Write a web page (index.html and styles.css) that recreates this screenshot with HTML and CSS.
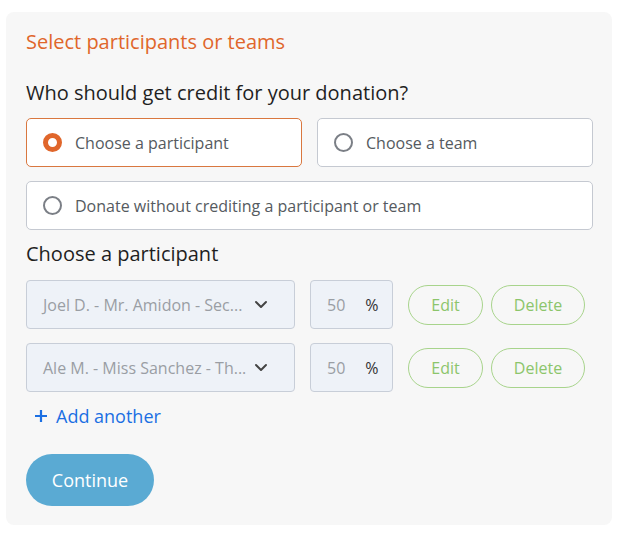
FILE: index.html
```html
<!DOCTYPE html>
<html lang="en">
<head>
<meta charset="utf-8">
<title>Select participants or teams</title>
<link rel="stylesheet" href="styles.css">
</head>
<body>
<div class="card">
  <h2 class="title">Select participants or teams</h2>
  <h3 class="question">Who should get credit for your donation?</h3>
  <div class="options">
    <label class="option selected"><span class="radio on"></span><span>Choose a participant</span></label>
    <label class="option"><span class="radio"></span><span>Choose a team</span></label>
    <label class="option wide"><span class="radio"></span><span>Donate without crediting a participant or team</span></label>
  </div>
  <h3 class="sub">Choose a participant</h3>
  <div class="rows">
    <div class="row">
      <div class="select"><span class="sel-text">Joel D. - Mr. Amidon - Sec...</span>
        <svg class="chev" width="14" height="9" viewBox="0 0 14 9"><path d="M2 2 L7 7 L12 2" fill="none" stroke="#444" stroke-width="2" stroke-linecap="round" stroke-linejoin="round"/></svg>
      </div>
      <div class="pct"><span class="num">50</span><span class="sign">%</span></div>
      <button class="pill edit">Edit</button>
      <button class="pill del">Delete</button>
    </div>
    <div class="row">
      <div class="select"><span class="sel-text">Ale M. - Miss Sanchez - Th...</span>
        <svg class="chev" width="14" height="9" viewBox="0 0 14 9"><path d="M2 2 L7 7 L12 2" fill="none" stroke="#444" stroke-width="2" stroke-linecap="round" stroke-linejoin="round"/></svg>
      </div>
      <div class="pct"><span class="num">50</span><span class="sign">%</span></div>
      <button class="pill edit">Edit</button>
      <button class="pill del">Delete</button>
    </div>
  </div>
  <a class="add" href="#"><svg width="14" height="14" viewBox="0 0 14 14"><path d="M7 1 V13 M1 7 H13" stroke="#1b6fe3" stroke-width="2.2"/></svg><span>Add another</span></a>
  <button class="continue">Continue</button>
</div>
</body>
</html>
```

FILE: styles.css
```css
* { box-sizing: border-box; }
body {
  margin: 0;
  background: #fff;
  font-family: "Open Sans", "Noto Sans", sans-serif;
}
.card {
  margin: 12px 8px 12px 6px;
  width: 606px;
  height: 513px;
  background: #f7f7f7;
  border-radius: 8px;
  padding: 16px 19px 0 20px;
}
.title {
  margin: 0;
  font-size: 20px;
  font-weight: 400;
  line-height: 27px;
  color: #e0662b;
}
.question {
  margin: 24px 0 0;
  font-size: 20px;
  font-weight: 500;
  line-height: 27px;
  color: #1f1f1f;
}
.options {
  margin-top: 12px;
  display: grid;
  grid-template-columns: 276px 276px;
  column-gap: 15px;
  row-gap: 14px;
}
.option {
  height: 49px;
  background: #fff;
  border: 1px solid #c5c9d1;
  border-radius: 5px;
  display: flex;
  align-items: center;
  gap: 13px;
  padding-left: 16px;
  font-size: 16px;
  color: #555a60;
}
.option.selected { border-color: #d9773f; }
.option.wide { grid-column: 1 / 3; }
.radio {
  width: 19px;
  height: 19px;
  border-radius: 50%;
  border: 2px solid #7b7f86;
  flex: none;
}
.radio.on {
  border: 5px solid #e0662b;
  background: #fff;
}
.sub {
  margin: 10px 0 0;
  font-size: 20px;
  font-weight: 500;
  line-height: 27px;
  color: #1f1f1f;
}
.rows {
  margin-top: 13px;
  display: flex;
  flex-direction: column;
  gap: 14px;
}
.row {
  display: flex;
  align-items: center;
}
.select {
  width: 269px;
  height: 49px;
  background: #eef2f8;
  border: 1px solid #c8ced8;
  border-radius: 4px;
  display: flex;
  align-items: center;
  justify-content: space-between;
  padding: 0 26px 0 16px;
  font-size: 16px;
  color: #9a9ea4;
}
.chev { flex: none; }
.pct {
  margin-left: 15px;
  width: 83px;
  height: 49px;
  background: #eef2f8;
  border: 1px solid #c8ced8;
  border-radius: 4px;
  display: flex;
  align-items: center;
  padding-left: 16px;
  font-size: 16px;
}
.pct .num { color: #9a9ea4; }
.pct .sign { margin-left: 20px; color: #333; }
.pill {
  height: 40px;
  border: 1px solid #a8d48c;
  border-radius: 20px;
  background: transparent;
  color: #8cc56b;
  font-family: inherit;
  font-size: 16px;
  padding: 0;
}
.edit { margin-left: 15px; width: 75px; }
.del { margin-left: 8px; width: 94px; }
.add {
  margin: 12px 0 0 8px;
  display: inline-flex;
  align-items: center;
  gap: 8px;
  font-size: 18px;
  color: #1b6fe3;
  text-decoration: none;
  line-height: 24px;
}
.continue {
  display: block;
  margin-top: 26px;
  width: 128px;
  height: 52px;
  border: none;
  border-radius: 26px;
  background: #5aaad3;
  color: #fff;
  font-family: inherit;
  font-size: 18px;
  padding: 0;
}
```
